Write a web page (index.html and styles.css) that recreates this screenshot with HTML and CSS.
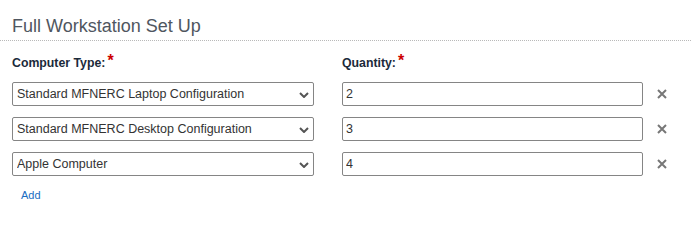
FILE: index.html
```html
<!DOCTYPE html>
<html lang="en">
<head>
<meta charset="utf-8">
<title>Full Workstation Set Up</title>
<link rel="stylesheet" href="styles.css">
</head>
<body>
<section class="panel">
  <h2 class="panel-title">Full Workstation Set Up</h2>
  <div class="form-grid">
    <label class="field-label">Computer Type:<span class="req">*</span></label>
    <label class="field-label">Quantity:<span class="req">*</span></label>
    <span></span>

    <div class="select-wrap">
      <select class="ctrl select"><option>Standard MFNERC Laptop Configuration</option></select>
      <svg class="chev" width="10" height="6" viewBox="0 0 10 6"><path d="M1 1 L5 5 L9 1" fill="none" stroke="#555" stroke-width="2"/></svg>
    </div>
    <input class="ctrl input" type="text" value="2">
    <button class="remove" type="button" aria-label="Remove"><svg width="10" height="10" viewBox="0 0 10 10"><path d="M1 1 L9 9 M9 1 L1 9" stroke="#777" stroke-width="2"/></svg></button>

    <div class="select-wrap">
      <select class="ctrl select"><option>Standard MFNERC Desktop Configuration</option></select>
      <svg class="chev" width="10" height="6" viewBox="0 0 10 6"><path d="M1 1 L5 5 L9 1" fill="none" stroke="#555" stroke-width="2"/></svg>
    </div>
    <input class="ctrl input" type="text" value="3">
    <button class="remove" type="button" aria-label="Remove"><svg width="10" height="10" viewBox="0 0 10 10"><path d="M1 1 L9 9 M9 1 L1 9" stroke="#777" stroke-width="2"/></svg></button>

    <div class="select-wrap">
      <select class="ctrl select"><option>Apple Computer</option></select>
      <svg class="chev" width="10" height="6" viewBox="0 0 10 6"><path d="M1 1 L5 5 L9 1" fill="none" stroke="#555" stroke-width="2"/></svg>
    </div>
    <input class="ctrl input" type="text" value="4">
    <button class="remove" type="button" aria-label="Remove"><svg width="10" height="10" viewBox="0 0 10 10"><path d="M1 1 L9 9 M9 1 L1 9" stroke="#777" stroke-width="2"/></svg></button>
  </div>
  <a class="add-link" href="#">Add</a>
</section>
</body>
</html>
```

FILE: styles.css
```css
html, body {
  margin: 0;
  padding: 0;
  background: #ffffff;
  font-family: "Liberation Sans", Arial, sans-serif;
}

.panel {
  width: 691px;
}

.panel-title {
  margin: 0;
  padding: 15px 0 3px 12px;
  font-size: 18px;
  line-height: 22px;
  font-weight: normal;
  color: #4f5660;
  border-bottom: 1px dotted #b9b9b9;
}

.form-grid {
  display: grid;
  grid-template-columns: 302px 301px 20px;
  column-gap: 28px;
  row-gap: 11px;
  padding: 14px 0 0 12px;
}

.form-grid > :nth-child(3n) {
  margin-left: -14px;
}

.field-label {
  font-size: 12.3px;
  line-height: 16px;
  font-weight: bold;
  color: #1b2a3a;
}

.req {
  color: #cc0000;
  font-size: 16px;
  margin-left: 2px;
  vertical-align: 1px;
  line-height: 0;
}

.select-wrap {
  position: relative;
  height: 24px;
}

.ctrl {
  box-sizing: border-box;
  height: 24px;
  width: 100%;
  margin: 0;
  border: 1px solid #858585;
  border-radius: 2px;
  background: #fff;
  font-family: "Liberation Sans", Arial, sans-serif;
  font-size: 12.5px;
  color: #333;
}

.select {
  appearance: none;
  -webkit-appearance: none;
  padding: 0 20px 0 4px;
}

.input {
  padding: 0 3px;
}

.chev {
  position: absolute;
  right: 5px;
  top: 10px;
  pointer-events: none;
}

.remove {
  display: flex;
  align-items: center;
  justify-content: flex-start;
  height: 24px;
  padding: 0;
  border: 0;
  background: transparent;
}

.add-link {
  display: inline-block;
  margin: 12px 0 0 21px;
  font-size: 11px;
  line-height: 14px;
  color: #1a6dc2;
  text-decoration: none;
}
```
